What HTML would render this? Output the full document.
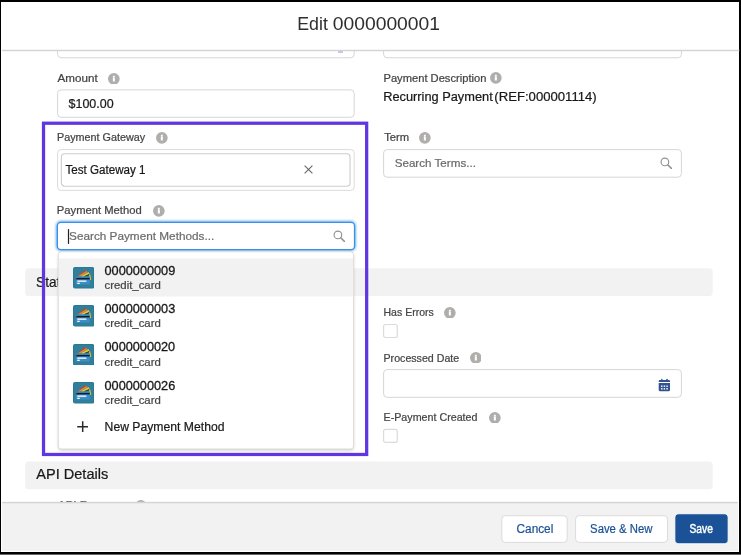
<!DOCTYPE html>
<html>
<head>
<meta charset="utf-8">
<title>Edit 0000000001</title>
<style>
html,body{margin:0;padding:0;}
body{width:741px;height:555px;overflow:hidden;background:#000;position:relative;font-family:"Liberation Sans",sans-serif;color:#181818;}
.abs{position:absolute;transform-origin:0 0;}
.t{position:absolute;left:0;top:0;transform-origin:0 0;white-space:nowrap;-webkit-text-stroke:0.22px currentColor;}
#frame{left:1.2px;top:2px;width:738.1px;height:550px;background:#fff;}
#bottomline{left:0;top:554.2px;width:741px;height:1px;background:#666;}
#root{left:0;top:0;width:741px;height:555px;will-change:transform;}
</style>
</head>
<body>
<div id="frame" class="abs"></div>
<div id="bottomline" class="abs"></div>
<div id="root" class="abs">
  <svg class="abs" style="left:56px;top:29px;" width="300" height="31"><rect x="1.60" y="1.50" width="296.60" height="27.30" rx="3.50" fill="#fff" stroke="#d8d5d3" stroke-width="1.0" /></svg>
  <svg class="abs" style="left:382px;top:29px;" width="301" height="31"><rect x="1.60" y="1.50" width="297.80" height="27.30" rx="3.50" fill="#fff" stroke="#d8d5d3" stroke-width="1.0" /></svg>
  <div class="abs" style="left:337.5px;top:51.2px;width:5.00px;height:1.40px;background:#bccbe6;"></div>
  <div class="abs" style="left:2.2px;top:2px;width:737.10px;height:48.00px;background:#fff;"></div>
  <svg class="abs" style="left:1px;top:48px;" width="740" height="5"><rect x="1.10" y="1.80" width="737.20" height="1.40" rx="0.00" fill="#d6d2d1"  /></svg>
  <div class="t" style="font-size:18.5px;line-height:24px;color:#2e2e2e;-webkit-text-stroke:0;transform:translate(297.24px,12.30px) rotate(0.02deg) scaleX(0.9593);">Edit <span style="position:absolute;left:36.80px;top:0;transform-origin:0 0;transform:scaleX(1.0872);">0000000001</span></div>
  <div class="t" style="font-size:10.2px;line-height:13px;color:#444;transform:translate(57.58px,72.10px) rotate(0.02deg) scaleX(1.1410);">Amount</div>
  <svg class="abs" style="left:108.45px;top:72.55px;width:11.7px;height:11.7px;" viewBox="0 0 12 12"><circle cx="6" cy="6" r="6" fill="#b0adab"/><rect x="4.95" y="4.4" width="2.1" height="4.4" rx="0.3" fill="#fff"/><rect x="4.95" y="2.7" width="2.1" height="1.35" rx="0.5" fill="#fff"/></svg>
  <svg class="abs" style="left:56px;top:88px;" width="300" height="31"><rect x="1.60" y="1.90" width="296.60" height="27.40" rx="3.50" fill="#fff" stroke="#d8d5d3" stroke-width="1.0" /></svg>
  <div class="t" style="font-size:12.4px;line-height:16px;color:#181818;transform:translate(68.56px,95.80px) rotate(0.02deg) scaleX(1.0067);">$100.00</div>
  <div class="t" style="font-size:10.2px;line-height:13px;color:#444;transform:translate(57.01px,131.30px) rotate(0.02deg) scaleX(1.0597);">Payment Gateway</div>
  <svg class="abs" style="left:155.85px;top:132.45px;width:11.7px;height:11.7px;" viewBox="0 0 12 12"><circle cx="6" cy="6" r="6" fill="#b0adab"/><rect x="4.95" y="4.4" width="2.1" height="4.4" rx="0.3" fill="#fff"/><rect x="4.95" y="2.7" width="2.1" height="1.35" rx="0.5" fill="#fff"/></svg>
  <svg class="abs" style="left:56px;top:148px;" width="300" height="44"><rect x="1.60" y="1.60" width="296.60" height="40.80" rx="3.50" fill="#fff" stroke="#dddbda" stroke-width="1.0" /></svg>
  <svg class="abs" style="left:59px;top:152px;" width="293" height="36"><rect x="2.35" y="1.75" width="288.70" height="32.50" rx="3.45" fill="#fff" stroke="#cfccca" stroke-width="1.1" /></svg>
  <div class="t" style="font-size:12.0px;line-height:16px;color:#181818;transform:translate(65.54px,162.20px) rotate(0.02deg) scaleX(0.9664);">Test Gateway 1</div>
  <svg class="abs" style="left:304.3px;top:164.7px;width:9px;height:9px;" viewBox="0 0 9 9"><path d="M0.6 0.6 L8.4 8.4 M8.4 0.6 L0.6 8.4" stroke="#6a6a6a" stroke-width="1.15" fill="none"/></svg>
  <div class="t" style="font-size:10.2px;line-height:13px;color:#444;transform:translate(56.78px,204.00px) rotate(0.02deg) scaleX(1.1030);">Payment Method</div>
  <svg class="abs" style="left:152.95px;top:204.95px;width:11.7px;height:11.7px;" viewBox="0 0 12 12"><circle cx="6" cy="6" r="6" fill="#b0adab"/><rect x="4.95" y="4.4" width="2.1" height="4.4" rx="0.3" fill="#fff"/><rect x="4.95" y="2.7" width="2.1" height="1.35" rx="0.5" fill="#fff"/></svg>
  <svg class="abs" style="left:24px;top:267px;" width="690" height="31"><rect x="1.20" y="1.20" width="687.50" height="27.90" rx="3.50" fill="#f3f2f2"  /></svg>
  <div class="t" style="font-size:14.4px;line-height:19px;color:#181818;transform:translate(36.07px,272.60px) rotate(0.02deg) scaleX(0.9485);">Status</div>
  <div class="t" style="font-size:10.2px;line-height:13px;color:#444;transform:translate(383.48px,71.70px) rotate(0.02deg) scaleX(1.0950);">Payment Description</div>
  <svg class="abs" style="left:490.25px;top:71.95px;width:11.7px;height:11.7px;" viewBox="0 0 12 12"><circle cx="6" cy="6" r="6" fill="#b0adab"/><rect x="4.95" y="4.4" width="2.1" height="4.4" rx="0.3" fill="#fff"/><rect x="4.95" y="2.7" width="2.1" height="1.35" rx="0.5" fill="#fff"/></svg>
  <div class="t" style="font-size:12.9px;line-height:17px;color:#181818;transform:translate(383.15px,88.20px) rotate(0.02deg) scaleX(0.9930);">Recurring Payment <span style="position:absolute;left:112.42px;top:0;transform-origin:0 0;transform:scaleX(1.0250);">(REF:000001114)</span></div>
  <div class="t" style="font-size:10.2px;line-height:13px;color:#444;transform:translate(384.15px,131.20px) rotate(0.02deg) scaleX(1.1026);">Term</div>
  <svg class="abs" style="left:419.05px;top:131.85px;width:11.7px;height:11.7px;" viewBox="0 0 12 12"><circle cx="6" cy="6" r="6" fill="#b0adab"/><rect x="4.95" y="4.4" width="2.1" height="4.4" rx="0.3" fill="#fff"/><rect x="4.95" y="2.7" width="2.1" height="1.35" rx="0.5" fill="#fff"/></svg>
  <svg class="abs" style="left:382px;top:148px;" width="301" height="31"><rect x="1.60" y="1.60" width="297.80" height="27.60" rx="3.50" fill="#fff" stroke="#d8d5d3" stroke-width="1.0" /></svg>
  <div class="t" style="font-size:11.8px;line-height:15px;color:#6b6b6b;transform:translate(394.66px,156.20px) rotate(0.02deg) scaleX(0.9865);">Search Terms...</div>
  <svg class="abs" style="left:659.50px;top:157.40px;width:12.0px;height:12.0px;" viewBox="0 0 12 12"><circle cx="4.9" cy="4.9" r="3.8" stroke="#949290" stroke-width="1.15" fill="none"/><path d="M7.7 7.7 L11.4 11.4" stroke="#949290" stroke-width="1.5" stroke-linecap="round"/></svg>
  <div class="t" style="font-size:10.2px;line-height:13px;color:#444;transform:translate(383.54px,306.00px) rotate(0.02deg) scaleX(1.0309);">Has Errors</div>
  <svg class="abs" style="left:443.85px;top:306.65px;width:11.7px;height:11.7px;" viewBox="0 0 12 12"><circle cx="6" cy="6" r="6" fill="#b0adab"/><rect x="4.95" y="4.4" width="2.1" height="4.4" rx="0.3" fill="#fff"/><rect x="4.95" y="2.7" width="2.1" height="1.35" rx="0.5" fill="#fff"/></svg>
  <svg class="abs" style="left:382px;top:322px;" width="17" height="18"><rect x="1.60" y="2.50" width="13.70" height="13.00" rx="1.90" fill="#fff" stroke="#dddbda" stroke-width="1.2" /></svg>
  <div class="t" style="font-size:10.2px;line-height:13px;color:#444;transform:translate(383.53px,351.60px) rotate(0.02deg) scaleX(1.0437);">Processed Date</div>
  <svg class="abs" style="left:469.55px;top:351.65px;width:11.7px;height:11.7px;" viewBox="0 0 12 12"><circle cx="6" cy="6" r="6" fill="#b0adab"/><rect x="4.95" y="4.4" width="2.1" height="4.4" rx="0.3" fill="#fff"/><rect x="4.95" y="2.7" width="2.1" height="1.35" rx="0.5" fill="#fff"/></svg>
  <svg class="abs" style="left:382px;top:368px;" width="301" height="31"><rect x="1.60" y="1.60" width="297.80" height="27.70" rx="3.50" fill="#fff" stroke="#d8d5d3" stroke-width="1.0" /></svg>
  <svg class="abs" style="left:658px;top:378px;" width="13" height="14" viewBox="0 0 13 14"><g transform="translate(0.7,0.8)" fill="#34548e"><rect x="2.5" y="0" width="1.2" height="2.4" rx="0.5"/><rect x="7.7" y="0" width="1.2" height="2.4" rx="0.5"/><path d="M0 2.4 Q0 1.3 1.1 1.3 H10.2 Q11.3 1.3 11.3 2.4 V3.2 H0 Z"/><path d="M0 4.1 H11.3 V11.3 Q11.3 12.4 10.2 12.4 H1.1 Q0 12.4 0 11.3 Z"/><g fill="#fff"><rect x="2.3" y="6.7" width="1.5" height="1.4"/><rect x="4.95" y="6.7" width="1.5" height="1.4"/><rect x="7.6" y="6.7" width="1.5" height="1.4"/><rect x="2.3" y="9.3" width="1.5" height="1.4"/><rect x="4.95" y="9.3" width="1.5" height="1.4"/><rect x="7.6" y="9.3" width="1.5" height="1.4"/></g></g></svg>
  <div class="t" style="font-size:10.2px;line-height:13px;color:#444;transform:translate(383.52px,411.40px) rotate(0.02deg) scaleX(1.0501);">E-Payment Created</div>
  <svg class="abs" style="left:488.85px;top:411.65px;width:11.7px;height:11.7px;" viewBox="0 0 12 12"><circle cx="6" cy="6" r="6" fill="#b0adab"/><rect x="4.95" y="4.4" width="2.1" height="4.4" rx="0.3" fill="#fff"/><rect x="4.95" y="2.7" width="2.1" height="1.35" rx="0.5" fill="#fff"/></svg>
  <svg class="abs" style="left:382px;top:427px;" width="17" height="17"><rect x="1.60" y="2.40" width="13.70" height="13.00" rx="1.90" fill="#fff" stroke="#dddbda" stroke-width="1.2" /></svg>
  <svg class="abs" style="left:24px;top:460px;" width="690" height="31"><rect x="1.20" y="1.40" width="687.50" height="27.90" rx="3.50" fill="#f3f2f2"  /></svg>
  <div class="t" style="font-size:14px;line-height:18px;color:#181818;transform:translate(36.27px,465.45px) rotate(0.02deg) scaleX(1.0391);">API Details</div>
  <div class="t" style="font-size:10.2px;line-height:13px;color:#444;transform:translate(57.68px,498.70px) rotate(0.02deg) scaleX(1.1432);">API Response</div>
  <svg class="abs" style="left:134.75px;top:499.55px;width:11.7px;height:11.7px;" viewBox="0 0 12 12"><circle cx="6" cy="6" r="6" fill="#b0adab"/><rect x="4.95" y="4.4" width="2.1" height="4.4" rx="0.3" fill="#fff"/><rect x="4.95" y="2.7" width="2.1" height="1.35" rx="0.5" fill="#fff"/></svg>
  <svg class="abs" style="left:50px;top:215px;" width="312" height="42"><defs><filter id="gl" x="-5%" y="-30%" width="110%" height="160%"><feGaussianBlur stdDeviation="1.1"/></filter></defs><rect x="6.9" y="6.9" width="298.0" height="28.2" rx="4" fill="none" stroke="#0176d3" stroke-width="2.2" opacity="0.55" filter="url(#gl)"/><rect x="7.35" y="7.35" width="297.2" height="27.3" rx="3.6" fill="#fff" stroke="#3790ec" stroke-width="1.3"/></svg>
  <svg class="abs" style="left:66px;top:228px;" width="5" height="17"><rect x="1.90" y="1.10" width="1.20" height="14.80" rx="0.00" fill="#222"  /></svg>
  <div class="t" style="font-size:11.8px;line-height:15px;color:#6b6b6b;transform:translate(69.06px,228.80px) rotate(0.02deg) scaleX(0.9973);">Search Payment Methods...</div>
  <svg class="abs" style="left:333.00px;top:230.00px;width:12.0px;height:12.0px;" viewBox="0 0 12 12"><circle cx="4.9" cy="4.9" r="3.8" stroke="#949290" stroke-width="1.15" fill="none"/><path d="M7.7 7.7 L11.4 11.4" stroke="#949290" stroke-width="1.5" stroke-linecap="round"/></svg>
  <div class="abs" style="left:58px;top:252px;width:296.00px;height:197.00px;border-radius:4px;box-shadow:0 2px 3px rgba(0,0,0,0.16);"></div>
  <svg class="abs" style="left:56px;top:250px;" width="300" height="201"><rect x="2.30" y="1.70" width="295.30" height="197.30" rx="3.00" fill="#fff" stroke="#dddad9" stroke-width="1.0" /></svg>
  <svg class="abs" style="left:57px;top:257px;" width="298" height="41"><rect x="1.80" y="1.40" width="294.30" height="38.10" rx="0.00" fill="#f3f2f2"  /></svg>
  <svg class="abs" style="left:72.8px;top:267.10px;width:21.2px;height:21.6px;" viewBox="0 0 21.2 21.6"><use href="#card"/></svg>
  <div class="t" style="font-size:12.6px;line-height:16px;color:#181818;-webkit-text-stroke:0.3px;transform:translate(104.50px,262.80px) rotate(0.02deg) scaleX(1.0104);">0000000009</div>
  <div class="t" style="font-size:10.8px;line-height:14px;color:#444;transform:translate(104.52px,278.10px) rotate(0.02deg) scaleX(1.0539);">credit_card</div>
  <svg class="abs" style="left:72.8px;top:305.43px;width:21.2px;height:21.6px;" viewBox="0 0 21.2 21.6"><use href="#card"/></svg>
  <div class="t" style="font-size:12.6px;line-height:16px;color:#181818;-webkit-text-stroke:0.3px;transform:translate(104.50px,301.13px) rotate(0.02deg) scaleX(1.0098);">0000000003</div>
  <div class="t" style="font-size:10.8px;line-height:14px;color:#444;transform:translate(104.52px,316.43px) rotate(0.02deg) scaleX(1.0539);">credit_card</div>
  <svg class="abs" style="left:72.8px;top:343.76px;width:21.2px;height:21.6px;" viewBox="0 0 21.2 21.6"><use href="#card"/></svg>
  <div class="t" style="font-size:12.6px;line-height:16px;color:#181818;-webkit-text-stroke:0.3px;transform:translate(104.50px,339.46px) rotate(0.02deg) scaleX(1.0089);">0000000020</div>
  <div class="t" style="font-size:10.8px;line-height:14px;color:#444;transform:translate(104.52px,354.76px) rotate(0.02deg) scaleX(1.0539);">credit_card</div>
  <svg class="abs" style="left:72.8px;top:382.09px;width:21.2px;height:21.6px;" viewBox="0 0 21.2 21.6"><use href="#card"/></svg>
  <div class="t" style="font-size:12.6px;line-height:16px;color:#181818;-webkit-text-stroke:0.3px;transform:translate(104.50px,377.79px) rotate(0.02deg) scaleX(1.0098);">0000000026</div>
  <div class="t" style="font-size:10.8px;line-height:14px;color:#444;transform:translate(104.52px,393.09px) rotate(0.02deg) scaleX(1.0539);">credit_card</div>
  <svg class="abs" style="left:76.9px;top:420.7px;width:11.4px;height:11.4px;" viewBox="0 0 11 11"><path d="M5.5 0.2 V10.8 M0.2 5.5 H10.8" stroke="#2b2b2b" stroke-width="1.45" fill="none"/></svg>
  <div class="t" style="font-size:12.9px;line-height:17px;color:#181818;transform:translate(104.60px,417.80px) rotate(0.02deg) scaleX(0.9454);">New Payment Method</div>
  <svg class="abs" style="left:40px;top:120px;" width="330" height="338"><rect x="3.52" y="3.22" width="323.15" height="331.25" rx="0.00" fill="none" stroke="#5f36e1" stroke-width="3.25" /></svg>
  <div class="abs" style="left:2.2px;top:502px;width:735.60px;height:48.60px;background:#f3f2f2;"></div>
  <svg class="abs" style="left:1px;top:500px;" width="738" height="5"><rect x="1.20" y="1.80" width="735.60" height="1.50" rx="0.00" fill="#d8d4d3"  /></svg>
  <svg class="abs" style="left:500px;top:514px;" width="69" height="30"><rect x="1.80" y="1.70" width="65.40" height="26.70" rx="3.50" fill="#fff" stroke="#dddbda" stroke-width="1.0" /></svg>
  <div class="t" style="font-size:12.0px;line-height:16px;color:#1b5297;transform:translate(516.60px,521.10px) rotate(0.02deg) scaleX(0.9822);">Cancel</div>
  <svg class="abs" style="left:574px;top:514px;" width="95" height="30"><rect x="1.60" y="1.70" width="91.90" height="26.70" rx="3.50" fill="#fff" stroke="#dddbda" stroke-width="1.0" /></svg>
  <div class="t" style="font-size:12.0px;line-height:16px;color:#1b5297;transform:translate(590.08px,521.10px) rotate(0.02deg) scaleX(0.9451);">Save &amp; New</div>
  <svg class="abs" style="left:673px;top:512px;" width="57" height="34"><rect x="1.85" y="1.75" width="53.30" height="30.00" rx="4.05" fill="#1b5297" stroke="#fff" stroke-width="0.9" /></svg>
  <div class="t" style="font-size:12.0px;line-height:16px;color:#fff;-webkit-text-stroke:0.45px #fff;transform:translate(689.53px,521.20px) rotate(0.02deg) scaleX(0.8527);">Save</div>
</div>
<svg width="0" height="0" style="position:absolute">
  <defs>
    <g id="card">
      <rect x="0" y="0" width="21.2" height="21.6" rx="2" fill="#2a7692"/>
      <rect x="0.8" y="0.8" width="19.6" height="20" rx="1.3" fill="#2f7f9d"/>
      <path d="M4.9 8.3 L12.8 3 L13.6 4.1 L5.7 9.1 Z" fill="#c8461c"/>
      <path d="M5.4 8.9 L13.6 3.9 L14.4 5.1 L6.8 9.5 Z" fill="#f28c26"/>
      <path d="M7.6 9.3 L15.6 5 L16.6 6.9 L9.6 9.8 Z" fill="#f3c22b"/>
      <path d="M11.8 8.9 L16.3 7 L16.7 8.1 L12.4 9.6 Z" fill="#1d3b3f"/>
      <path d="M16 7.6 L17.2 7.3 L18.3 12.6 L17 13.2 Z" fill="#e9bb2a"/>
      <rect x="2.8" y="9.4" width="13.9" height="8.2" rx="0.7" fill="#3a8fc7"/>
      <rect x="2.8" y="10.9" width="13.9" height="1.5" fill="#0d1b2c"/>
      <rect x="2.4" y="10.4" width="1.3" height="1.4" rx="0.5" fill="#c4552a"/>
      <rect x="4.3" y="13.5" width="9.1" height="1.3" fill="#fff"/>
      <rect x="4.3" y="15.7" width="2.4" height="1.3" fill="#fff"/>
    </g>
  </defs>
</svg>
</body>
</html>
